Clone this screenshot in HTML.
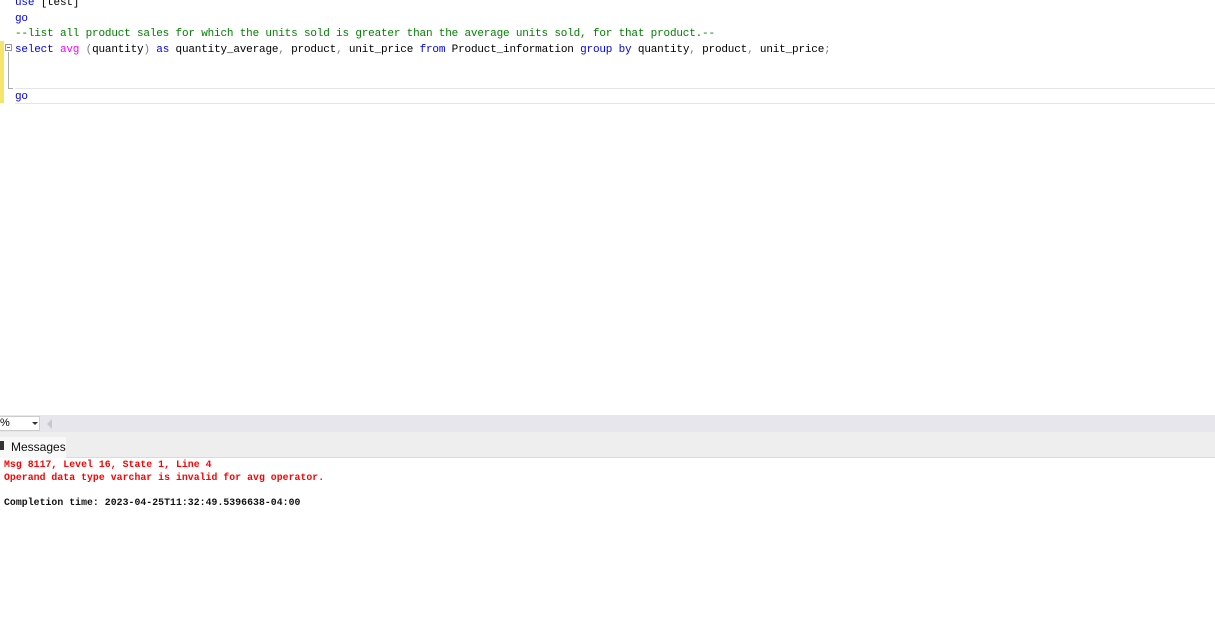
<!DOCTYPE html>
<html><head><style>
body{margin:0;width:1215px;height:630px;background:#fff;position:relative;overflow:hidden}
.code{position:absolute;left:15px;font-family:"Liberation Mono",monospace;font-size:11px;letter-spacing:-0.18px;white-space:pre;line-height:15.7px}
.k{color:#0000ff}.f{color:#ff00ff}.c{color:#008000}.g{color:#808080}.t{color:#000}
.msg{position:absolute;left:4px;font-family:"Liberation Mono",monospace;font-size:9.8px;font-weight:bold;white-space:pre;letter-spacing:0.05px;line-height:12.7px}
</style></head><body>
<div style="position:absolute;left:0;top:41px;width:4px;height:62px;background:#f5e66b"></div>
<div style="position:absolute;left:15px;top:88px;width:1200px;height:14px;border-top:1px solid #e4e4ea;border-bottom:1px solid #e4e4ea"></div>
<div style="position:absolute;left:5px;top:44px;width:7px;height:7px;border:1px solid #999;box-sizing:border-box;font-size:0"></div>
<div style="position:absolute;left:7px;top:47px;width:3px;height:1px;background:#666"></div>
<div style="position:absolute;left:8px;top:52px;width:1px;height:36px;background:#aaa"></div>
<div style="position:absolute;left:8px;top:88px;width:5px;height:1px;background:#aaa"></div>
<div class="code" style="top:-4px"><span class="k">use</span> <span class="t">[test]</span>
<span class="k">go</span>
<span class="c">--list all product sales for which the units sold is greater than the average units sold, for that product.--</span>
<span class="k">select</span> <span class="f">avg</span> <span class="g">(</span>quantity<span class="g">)</span> <span class="k">as</span> quantity_average<span class="g">,</span> product<span class="g">,</span> unit_price <span class="k">from</span> Product_information <span class="k">group by</span> quantity<span class="g">,</span> product<span class="g">,</span> unit_price<span class="g">;</span>


<span class="k">go</span></div>
<div style="position:absolute;left:0;top:415px;width:1215px;height:17px;background:#e6e6ec"></div>
<div style="position:absolute;left:-1px;top:416px;width:41px;height:15px;background:#fff;border:1px solid #ccc;box-sizing:border-box;font:11px 'Liberation Sans',sans-serif;line-height:13px">%<span style="position:absolute;left:32px;top:5px;border-left:3px solid transparent;border-right:3px solid transparent;border-top:3px solid #333"></span></div>
<div style="position:absolute;left:47px;top:419px;border-top:5px solid transparent;border-bottom:5px solid transparent;border-right:5px solid #c8c8cc"></div>
<div style="position:absolute;left:0;top:432px;width:1215px;height:25px;background:#eeeeee;border-bottom:1px solid #dadada"></div>
<div style="position:absolute;left:0;top:437px;width:66px;height:21px;background:#f8f8f8"></div>
<div style="position:absolute;left:0;top:441px;width:4px;height:9px;background:#333"></div>
<div style="position:absolute;left:11px;top:439px;font:12px 'Liberation Sans',sans-serif;color:#111;line-height:16px">Messages</div>
<div class="msg" style="top:459px;color:#f00">Msg 8117, Level 16, State 1, Line 4
Operand data type varchar is invalid for avg operator.</div>
<div class="msg" style="top:497px;color:#111">Completion time: 2023-04-25T11:32:49.5396638-04:00</div>
</body></html>
